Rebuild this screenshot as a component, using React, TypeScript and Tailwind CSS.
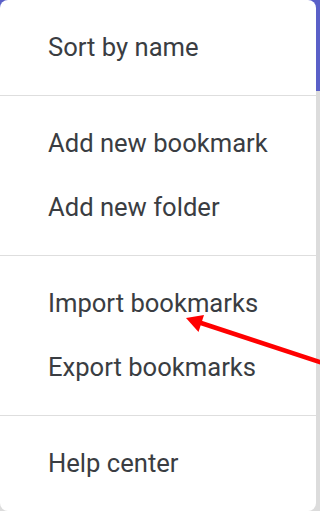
const sections: string[][] = [
  ["Sort by name"],
  ["Add new bookmark", "Add new folder"],
  ["Import bookmarks", "Export bookmarks"],
  ["Help center"],
];

export default function App() {
  return (
    <div className="relative w-[320px] h-[511px] overflow-hidden bg-[linear-gradient(#5a60c8_0,#5a60c8_91px,#dcdcdc_91px)]">
      <div
        className="w-[316px] h-[511px] bg-white rounded-lg flex flex-col text-[25.6px] text-[#3a3d42]"
        style={{ fontFamily: "Roboto, 'Liberation Sans', sans-serif" }}
      >
        {sections.map((items, i) => (
          <div key={i} className={`flex flex-col pb-4 ${i === 0 ? "pt-[15px]" : "pt-[15px] border-t border-[#dedede]"}`}>
            {items.map((label) => (
              <div key={label} className="h-16 flex items-center pl-12">
                {label}
              </div>
            ))}
          </div>
        ))}
      </div>
      {/* red annotation arrow */}
      <svg className="absolute inset-0 pointer-events-none" width="320" height="511" viewBox="0 0 320 511">
        <line x1="330" y1="365.5" x2="198" y2="322" stroke="#ff0000" strokeWidth="4.5" />
        <polygon points="186,318 204,315 198.5,332" fill="#ff0000" />
      </svg>
    </div>
  );
}
